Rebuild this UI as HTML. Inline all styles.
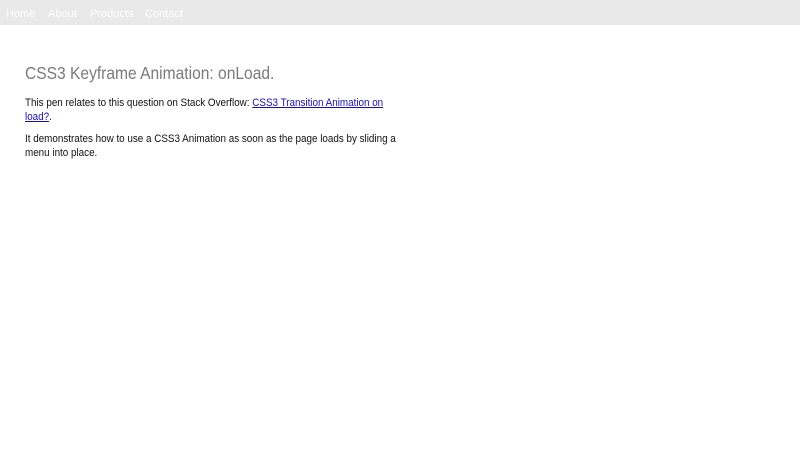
<!DOCTYPE html>
<html><head><meta charset="utf-8"><style>
html,body{margin:0;padding:0;background:#fff;width:800px;height:450px;overflow:hidden;font-family:"Liberation Sans",sans-serif;}
.nav{height:25px;background:#e9e9e9;position:relative;}
.nav span{position:absolute;top:8px;color:#fff;font-size:11px;}
h1{position:absolute;left:25px;top:63px;margin:0;font-weight:normal;font-size:17.5px;color:#7a7a7a;white-space:nowrap;transform:scaleX(0.89);transform-origin:0 0;}
p{position:absolute;left:25px;margin:0;font-size:10.6px;line-height:14px;color:#111;white-space:nowrap;transform:scaleX(0.93);transform-origin:0 0;}
a{color:#1a0dab;}
</style></head><body>
<div class="nav"><span style="left:6px">Home</span><span style="left:48px">About</span><span style="left:90px">Products</span><span style="left:145px">Contact</span></div>
<h1>CSS3 Keyframe Animation: onLoad.</h1>
<p style="top:96px">This pen relates to this question on Stack Overflow: <a href="#">CSS3 Transition Animation on</a><br><a href="#">load?</a>.</p>
<p style="top:132px">It demonstrates how to use a CSS3 Animation as soon as the page loads by sliding a<br>menu into place.</p>
</body></html>
